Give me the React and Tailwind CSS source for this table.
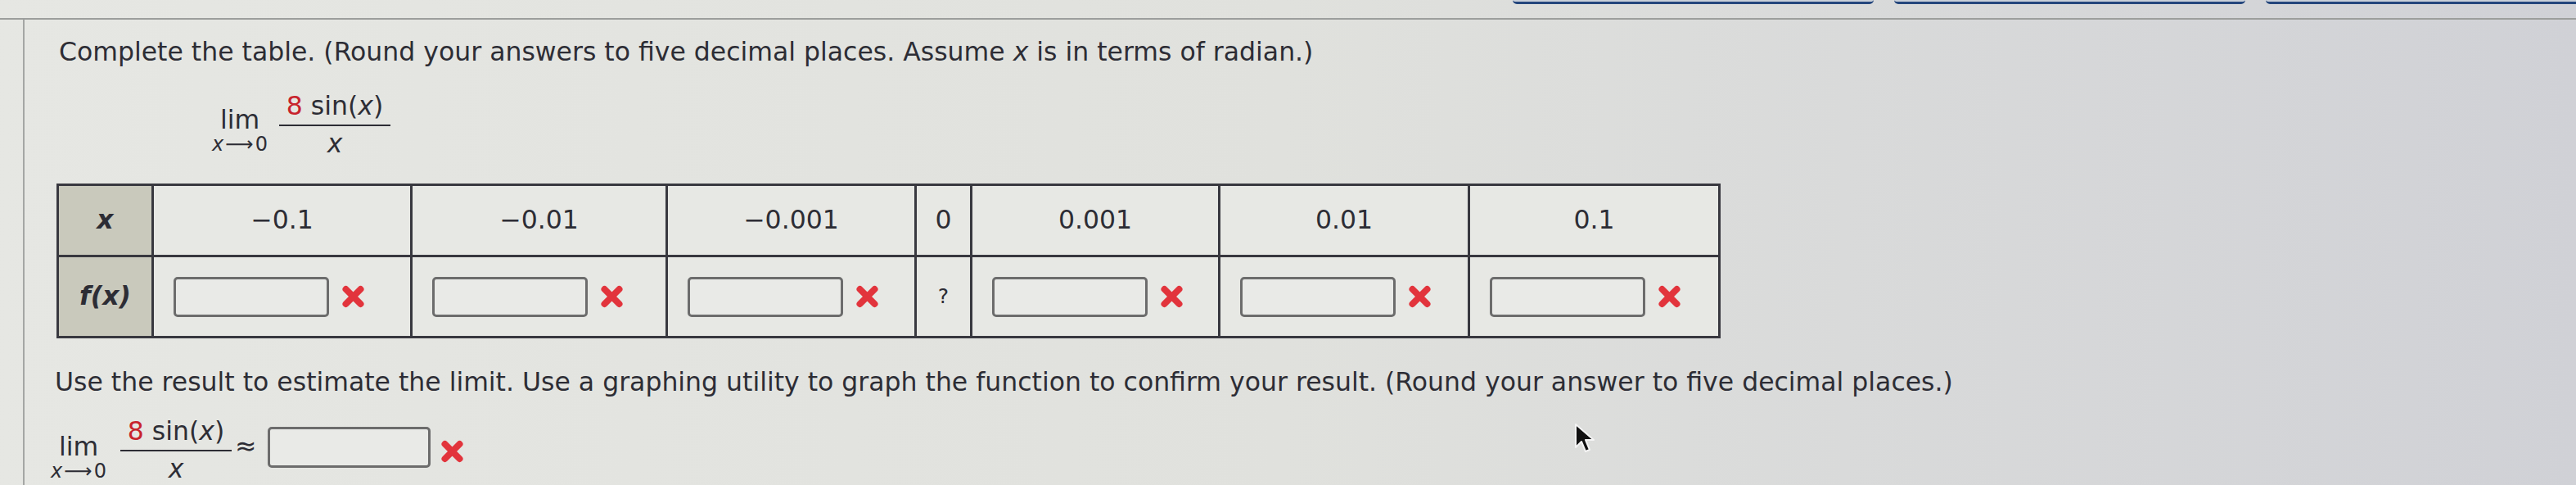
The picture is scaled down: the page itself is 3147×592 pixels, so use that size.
import React from "react";

const xs = ["−0.1", "−0.01", "−0.001", "0", "0.001", "0.01", "0.1"];

const Cross = ({ className = "" }) => (
  <svg viewBox="0 0 32 32" className={"w-[33px] h-[32px] shrink-0 " + className}>
    <path d="M7 7 L25 25 M25 7 L7 25" stroke="#e2343c" strokeWidth="8" strokeLinecap="round" fill="none" />
  </svg>
);

const AnswerBox = ({ className = "" }) => (
  <div className={"border-[3px] border-[#6c6c6c] rounded-[5px] bg-[#e9eae7] " + className} />
);

const Fraction = ({ width }) => (
  <div className={"flex flex-col items-center " + width}>
    <div className="h-[32px] leading-[32px] whitespace-nowrap">
      <span className="text-[#c8232c]">8</span> sin(<i>x</i>)
    </div>
    <div className="mt-[7px] h-[2px] w-full bg-[#2d2d35]" />
    <div className="mt-[5px] h-[32px] leading-[32px]">
      <i>x</i>
    </div>
  </div>
);

const LimStack = ({ width }) => (
  <div className={"flex flex-col items-center " + width}>
    <div className="h-[32px] leading-[32px]">lim</div>
    <div className="mt-[2px] h-[24px] leading-[24px] text-[24px] whitespace-nowrap">
      <i>x</i>
      <span className="mx-[2px]">⟶</span>0
    </div>
  </div>
);

const Cursor = () => (
  <svg viewBox="0 0 30 38" className="absolute left-[1922px] top-[516px] w-[30px] h-[38px]">
    <path
      d="M3 2 L3 30 L10 23 L15 35 L20 33 L15 21 L25 21 Z"
      fill="#111"
      stroke="#f4f4f4"
      strokeWidth="2"
      strokeLinejoin="round"
    />
  </svg>
);

export default function App() {
  return (
    <div className="relative w-[3147px] h-[592px] overflow-hidden bg-linear-to-r from-[#e6e7e3] via-[#e0e1dd] to-[#d0d1d6] text-[#2d2d35] text-[31.5px] font-['DejaVu_Sans',Verdana,sans-serif]">
      {/* top toolbar edge */}
      <div className="h-[24px] border-b-2 border-[#9c9e9c] flex items-start">
        <div className="ml-[1848px] flex gap-[25px]">
          <div className="w-[441px] h-[5px] rounded-b-[6px] border-b-[3px] border-[#24467c] bg-[#c9d0da]" />
          <div className="w-[429px] h-[5px] rounded-b-[6px] border-b-[3px] border-[#24467c] bg-[#c9d0da]" />
          <div className="w-[420px] h-[5px] rounded-b-[6px] border-b-[3px] border-[#24467c] bg-[#c9d0da]" />
        </div>
      </div>

      <div className="ml-[28px] h-full border-l-2 border-[#a4a6a4]">
        <p className="pt-[23px] pl-[42px] h-[55px] leading-[32px] whitespace-nowrap">
          Complete the table. (Round your answers to five decimal places. Assume <i>x</i> is in terms of radian.)
        </p>

        <div className="mt-[34px] ml-[226px] flex items-start gap-[11px]">
          <div className="mt-[17px]">
            <LimStack width="w-[74px]" />
          </div>
          <Fraction width="w-[136px]" />
        </div>

        <div className="mt-[33px] ml-[39px] w-fit grid grid-cols-[113px_313px_309px_301px_65px_300px_302px_303px] grid-rows-[84px_96px] gap-[3px] p-[3px] bg-[#38383f]">
          <div className="bg-[#c9c9bc] flex items-center justify-center font-bold italic">x</div>
          {xs.map((v) => (
            <div key={v} className="bg-[#e7e8e4] flex items-center justify-center">
              {v}
            </div>
          ))}
          <div className="bg-[#c9c9bc] flex items-center justify-center font-bold italic">f(x)</div>
          {xs.map((v) =>
            v === "0" ? (
              <div key={"f" + v} className="bg-[#e7e8e4] flex items-center justify-center text-[25px]">
                ?
              </div>
            ) : (
              <div key={"f" + v} className="bg-[#e7e8e4] flex items-center pl-[24px] gap-[13px]">
                <AnswerBox className="w-[190px] h-[49px]" />
                <Cross />
              </div>
            )
          )}
        </div>

        <p className="mt-[37px] pl-[37px] h-[32px] leading-[32px] whitespace-nowrap">
          Use the result to estimate the limit. Use a graphing utility to graph the function to confirm your result. (Round your answer to five decimal places.)
        </p>

        <div className="mt-[28px] ml-[30px] flex items-start">
          <div className="mt-[19px]">
            <LimStack width="w-[72px]" />
          </div>
          <div className="ml-[15px]">
            <Fraction width="w-[136px]" />
          </div>
          <div className="ml-[4px] mt-[18px] h-[32px] leading-[32px]">≈</div>
          <AnswerBox className="ml-[14px] mt-[11px] w-[199px] h-[50px]" />
          <Cross className="ml-[10px] mt-[25px]" />
        </div>
      </div>

      <Cursor />
    </div>
  );
}
